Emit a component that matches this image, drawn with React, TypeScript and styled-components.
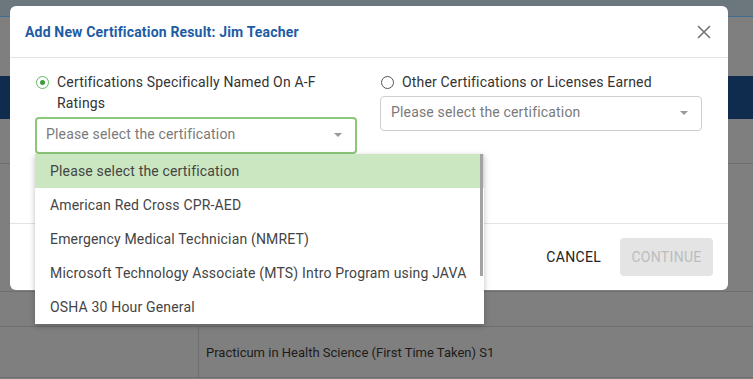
import React from "react";
import styled, { createGlobalStyle } from "styled-components";

const GlobalStyle = createGlobalStyle`
  html, body {
    margin: 0;
    padding: 0;
    width: 753px;
    height: 379px;
    overflow: hidden;
    font-family: Roboto, "Liberation Sans", Arial, sans-serif;
  }
`;

const options = [
  "Please select the certification",
  "American Red Cross CPR-AED",
  "Emergency Medical Technician (NMRET)",
  "Microsoft Technology Associate (MTS) Intro Program using JAVA",
  "OSHA 30 Hour General",
];

const App = () => {
  return (
    <>
      <GlobalStyle />
      <Page>
        <TopBar />
        <Gap />
        <NavBand />
        <Row height={44} />
        <Row height={127} />
        <Row height={34} />
        <TableRow>
          <Cell width={198} />
          <Cell>Practicum in Health Science (First Time Taken) S1</Cell>
        </TableRow>
        <Row height={10} />
      </Page>

      <Modal>
        <ModalHeader>
          <Title>Add New Certification Result: Jim Teacher</Title>
          <CloseButton aria-label="close">
            <svg width="14" height="14" viewBox="0 0 14 14">
              <path d="M1 1L13 13M13 1L1 13" stroke="#757575" strokeWidth="1.6" fill="none" />
            </svg>
          </CloseButton>
        </ModalHeader>
        <ModalBody>
          <Column>
            <RadioLabel>
              <Radio checked />
              <span>Certifications Specifically Named On A-F Ratings</span>
            </RadioLabel>
            <SelectWrap>
              <SelectBox focused>
                <Placeholder>Please select the certification</Placeholder>
                <Caret />
              </SelectBox>
              <Menu>
                {options.map((o, i) => (
                  <MenuItem key={o} active={i === 0}>{o}</MenuItem>
                ))}
                <ScrollThumb />
              </Menu>
            </SelectWrap>
          </Column>
          <Column>
            <RadioLabel>
              <Radio />
              <span>Other Certifications or Licenses Earned</span>
            </RadioLabel>
            <SelectWrap>
              <SelectBox>
                <Placeholder>Please select the certification</Placeholder>
                <Caret />
              </SelectBox>
            </SelectWrap>
          </Column>
        </ModalBody>
        <ModalFooter>
          <TextButton>CANCEL</TextButton>
          <ContinueButton disabled>CONTINUE</ContinueButton>
        </ModalFooter>
      </Modal>
    </>
  );
};

export default App;

const Page = styled.div`
  position: relative;
  width: 753px;
  height: 379px;
  background: #7f7f7f;
  display: flex;
  flex-direction: column;
`;

const TopBar = styled.div`
  height: 16px;
  background: #6b777c;
  border-bottom: 1px solid #3d6d92;
  flex-shrink: 0;
`;

const Gap = styled.div`
  height: 59px;
  flex-shrink: 0;
`;

const NavBand = styled.div`
  height: 43px;
  background: #0f2c4e;
  flex-shrink: 0;
`;

const Row = styled.div<{ height: number }>`
  height: ${({ height }) => height}px;
  border-bottom: 1px solid #6e6e6e;
  flex-shrink: 0;
`;

const TableRow = styled.div`
  display: flex;
  height: 50px;
  border-bottom: 1px solid #6e6e6e;
  flex-shrink: 0;
`;

const Cell = styled.div<{ width?: number }>`
  width: ${({ width }) => (width ? `${width}px` : "auto")};
  flex: ${({ width }) => (width ? "none" : "1")};
  border-right: ${({ width }) => (width ? "1px solid #6e6e6e" : "none")};
  display: flex;
  align-items: center;
  padding-left: ${({ width }) => (width ? 0 : 7)}px;
  font-size: 13px;
  color: #1e1b18;
`;

const Modal = styled.div`
  position: absolute;
  left: 10px;
  top: 6px;
  width: 718px;
  height: 284px;
  background: #fff;
  border-radius: 6px;
  display: flex;
  flex-direction: column;
  letter-spacing: 0.17px;
`;

const ModalHeader = styled.div`
  height: 51px;
  display: flex;
  align-items: center;
  justify-content: space-between;
  padding: 0 14px 0 15px;
  border-bottom: 1px solid #e3e3e3;
  flex-shrink: 0;
`;

const Title = styled.h2`
  margin: 0;
  font-size: 14px;
  font-weight: 700;
  color: #1d5ca5;
`;

const CloseButton = styled.button`
  border: none;
  background: none;
  padding: 0;
  width: 20px;
  height: 20px;
  display: flex;
  align-items: center;
  justify-content: center;
  cursor: pointer;
`;

const ModalBody = styled.div`
  flex: 1;
  display: grid;
  grid-template-columns: 322px 322px;
  column-gap: 23px;
  padding: 14px 0 0 25px;
  border-bottom: 1px solid #e3e3e3;
`;

const Column = styled.div`
  display: flex;
  flex-direction: column;
  gap: 3px;
`;

const RadioLabel = styled.label`
  display: flex;
  align-items: flex-start;
  gap: 8px;
  padding-left: 1px;
  font-size: 14px;
  line-height: 21px;
  color: #333;
  padding-right: 36px;
`;

const Radio = styled.span<{ checked?: boolean }>`
  flex-shrink: 0;
  width: 13px;
  height: 13px;
  margin-top: 4px;
  box-sizing: border-box;
  border-radius: 50%;
  border: 1px solid ${({ checked }) => (checked ? "#5cb85c" : "#555")};
  display: flex;
  align-items: center;
  justify-content: center;
  &::after {
    content: "";
    width: 5px;
    height: 5px;
    border-radius: 50%;
    background: ${({ checked }) => (checked ? "#3f9a3f" : "transparent")};
  }
`;

const SelectWrap = styled.div`
  position: relative;
`;

const SelectBox = styled.div<{ focused?: boolean }>`
  box-sizing: border-box;
  height: ${({ focused }) => (focused ? 37 : 35)}px;
  border: ${({ focused }) => (focused ? "2px solid #8cc87a" : "1px solid #cfcfcf")};
  border-radius: 4px;
  display: flex;
  align-items: center;
  justify-content: space-between;
  padding: 0 13px 4px ${({ focused }) => (focused ? 9 : 10)}px;
`;

const Placeholder = styled.span`
  font-size: 14px;
  color: #7a7a7a;
`;

const Caret = styled.span`
  width: 0;
  height: 0;
  margin-top: 3px;
  border-left: 4px solid transparent;
  border-right: 4px solid transparent;
  border-top: 4px solid #9a9a9a;
`;

const Menu = styled.ul`
  position: absolute;
  top: 100%;
  left: 0;
  width: 449px;
  margin: 0;
  padding: 0;
  list-style: none;
  background: #fff;
  box-shadow: 0 2px 6px rgba(0, 0, 0, 0.25);
  z-index: 2;
`;

const MenuItem = styled.li<{ active?: boolean }>`
  height: 34px;
  display: flex;
  align-items: center;
  padding-left: 15px;
  font-size: 14px;
  color: #444;
  background: ${({ active }) => (active ? "#cbe7c1" : "#fff")};
  white-space: nowrap;
`;

const ScrollThumb = styled.div`
  position: absolute;
  right: 1px;
  top: 0;
  width: 3px;
  height: 122px;
  background: #a3a3a3;
`;

const ModalFooter = styled.div`
  height: 66px;
  display: flex;
  align-items: center;
  justify-content: flex-end;
  gap: 3px;
  padding-right: 15px;
  flex-shrink: 0;
`;

const TextButton = styled.button`
  border: none;
  background: none;
  height: 38px;
  padding: 0 16px;
  font-family: inherit;
  font-size: 14px;
  font-weight: 400;
  color: #222;
  letter-spacing: 0.3px;
`;

const ContinueButton = styled.button`
  border: none;
  border-radius: 4px;
  background: #e4e4e4;
  width: 93px;
  height: 38px;
  font-family: inherit;
  font-size: 14px;
  font-weight: 400;
  color: #bdbdbd;
  letter-spacing: 0.3px;
`;
